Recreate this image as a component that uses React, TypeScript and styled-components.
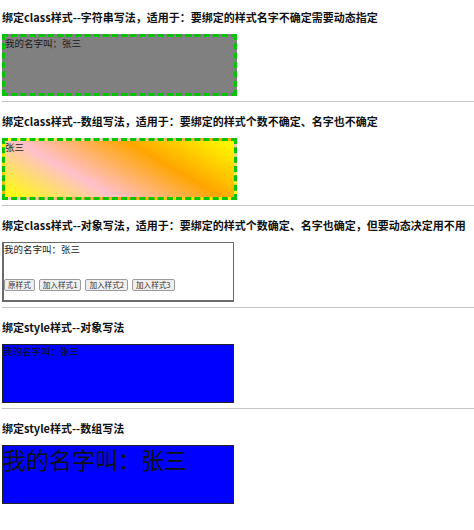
import { createGlobalStyle, styled } from "styled-components";

const GlobalStyle = createGlobalStyle`
  html, body {
    margin: 0;
    padding: 0;
    background: #ffffff;
  }
  body {
    font-family: "Noto Sans CJK SC", "Microsoft YaHei", "Liberation Sans", sans-serif;
    color: #000;
  }
`;

const Page = styled.div`
  display: flex;
  flex-direction: column;
  padding: 0 0 0 2px;
`;

const Section = styled.section`
  display: flex;
  flex-direction: column;
  align-items: flex-start;
  padding-top: 12px;

  &:first-child {
    padding-top: 10px;
  }
`;

const Heading = styled.h3`
  margin: 0 0 10px;
  font-size: 11px;
  line-height: 14px;
  font-weight: 700;
  color: #111;
  white-space: nowrap;
`;

type BoxVariant = "sad" | "happy" | "basic" | "blue";

const boxHeight: Record<BoxVariant, number> = {
  sad: 62,
  happy: 62,
  basic: 60,
  blue: 59,
};

const Box = styled.div<{ $variant: BoxVariant; $size?: number }>`
  box-sizing: border-box;
  display: flex;
  flex-direction: column;
  align-items: flex-start;
  width: ${(p) => (p.$variant === "sad" || p.$variant === "happy" ? 235 : 232)}px;
  height: ${(p) => boxHeight[p.$variant]}px;
  font-size: ${(p) => p.$size ?? 9.5}px;
  line-height: ${(p) => (p.$size ? 1.2 : 1.3)};
  color: #1a1a1a;
  ${(p) =>
    p.$variant === "sad" &&
    `
    border: 3px dashed rgb(2, 197, 2);
    background-color: #808080;
  `}
  ${(p) =>
    p.$variant === "happy" &&
    `
    border: 3px dashed rgb(2, 197, 2);
    background-image: linear-gradient(30deg, yellow, pink, orange, yellow);
  `}
  ${(p) =>
    p.$variant === "basic" &&
    `
    border: 1px solid #6a6a6a;
    border-left-width: 2px;
    border-bottom-width: 2px;
    background: #fff;
  `}
  ${(p) =>
    p.$variant === "blue" &&
    `
    border: 1px solid #222;
    background-color: #0000ff;
    color: #111;
  `}
`;

const ButtonRow = styled.div`
  display: flex;
  gap: 4px;
  margin-top: 24px;
`;

const SmallButton = styled.button`
  height: 12px;
  padding: 0 3px;
  font-family: inherit;
  font-size: 7.6px;
  line-height: 10px;
  color: #333;
  background: #efefef;
  border: 1px solid #9a9a9a;
  border-radius: 2px;
`;

const Divider = styled.hr`
  align-self: stretch;
  margin: 5px 0 0;
  border: 0;
  border-top: 1px solid #c4c4c4;
  height: 0;
`;

const name = "张三";

export default function App() {
  return (
    <Page>
      <GlobalStyle />
      <Section>
        <Heading>绑定class样式--字符串写法，适用于：要绑定的样式名字不确定需要动态指定</Heading>
        <Box $variant="sad">我的名字叫：{name}</Box>
        <Divider />
      </Section>

      <Section>
        <Heading>绑定class样式--数组写法，适用于：要绑定的样式个数不确定、名字也不确定</Heading>
        <Box $variant="happy">{name}</Box>
        <Divider />
      </Section>

      <Section>
        <Heading>绑定class样式--对象写法，适用于：要绑定的样式个数确定、名字也确定，但要动态决定用不用</Heading>
        <Box $variant="basic">
          <span>我的名字叫：{name}</span>
          <ButtonRow>
            <SmallButton>原样式</SmallButton>
            <SmallButton>加入样式1</SmallButton>
            <SmallButton>加入样式2</SmallButton>
            <SmallButton>加入样式3</SmallButton>
          </ButtonRow>
        </Box>
        <Divider />
      </Section>

      <Section>
        <Heading>绑定style样式--对象写法</Heading>
        <Box $variant="blue">我的名字叫：{name}</Box>
        <Divider />
      </Section>

      <Section>
        <Heading>绑定style样式--数组写法</Heading>
        <Box $variant="blue" $size={23}>
          我的名字叫：{name}
        </Box>
      </Section>
    </Page>
  );
}
